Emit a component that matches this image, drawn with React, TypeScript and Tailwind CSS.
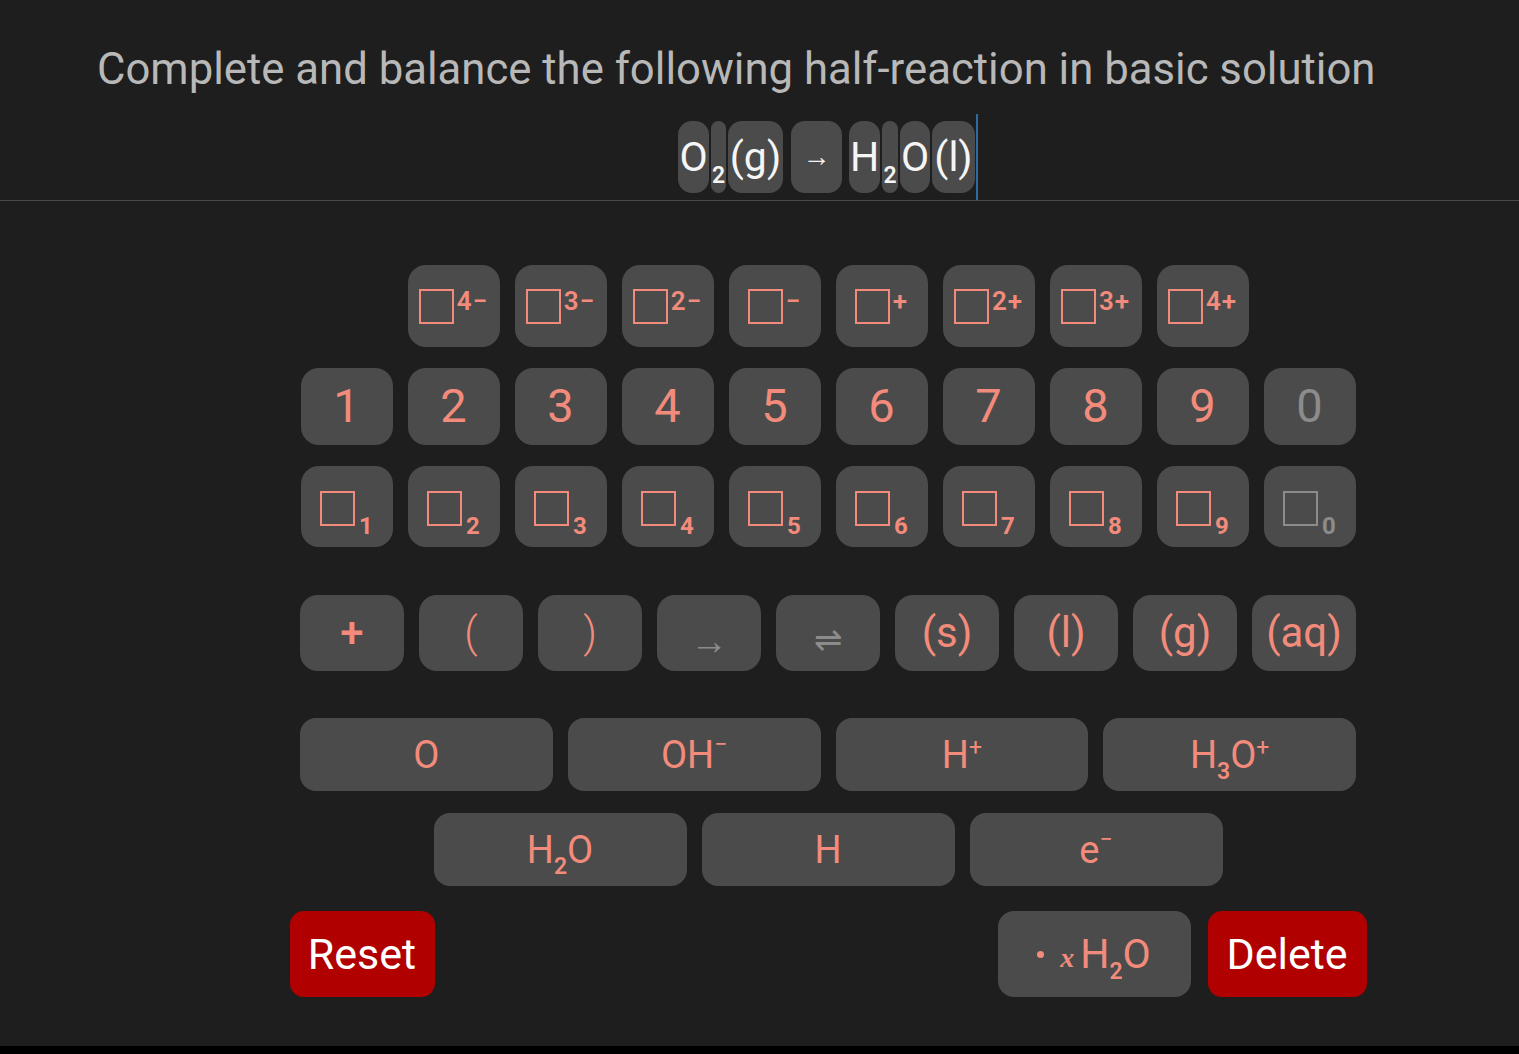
import type { ReactNode } from 'react';

// keypad rows
const charges = ['4−', '3−', '2−', '−', '+', '2+', '3+', '4+'];
const digits = ['1', '2', '3', '4', '5', '6', '7', '8', '9', '0'];

function Key({ className = '', children }: { className?: string; children: ReactNode }) {
    return (
        <button className={`flex items-center justify-center bg-[#4b4b4b] text-[#f28b7b] ${className}`}>
            {children}
        </button>
    );
}

function Square({ muted = false }: { muted?: boolean }) {
    return <span className={`block w-[35px] h-[35px] border-[2.5px] ${muted ? 'border-[#8c8c8c]' : 'border-[#f28b7b]'}`} />;
}

function Token({ className = '', children }: { className?: string; children: ReactNode }) {
    return (
        <div className={`flex h-[72px] items-center justify-center rounded-[14px] bg-[#4b4b4b] ${className}`}>
            {children}
        </div>
    );
}

// inline sub/superscripts, sized for the 38-41px key labels
function Sub({ children }: { children: ReactNode }) {
    return <span className="relative top-[11px] text-[23px] font-semibold leading-none">{children}</span>;
}

function Sup({ children, plus = false }: { children: ReactNode; plus?: boolean }) {
    return <span className={`relative text-[23px] leading-none ${plus ? '-top-[13px]' : '-top-[16px]'}`}>{children}</span>;
}

export default function App() {
    return (
        <div className="min-h-screen bg-black font-['Roboto',sans-serif]">
            <div className="h-[1046px] bg-[#1e1e1e]">
                <h1 className="pl-[97px] pt-[45px] text-[43.7px] leading-[48px] text-[#b8b8b8]">
                    Complete and balance the following half-reaction in basic solution
                </h1>

                {/* equation being built */}
                <div className="mt-[21px] border-b border-[#4a4a4a]">
                    <div className="ml-[300px] w-[1056px] flex h-[86px] items-center justify-center text-[41px] leading-none text-[#f5f5f5]">
                        <div className="flex items-center gap-[2px]">
                            <Token className="w-[31px]">O</Token>
                            <Token className="w-[15px]">
                                <span className="mt-[36px] text-[23px] font-semibold leading-none">2</span>
                            </Token>
                            <Token className="w-[55px]">(g)</Token>
                            <Token className="ml-[6px] mr-[5px] w-[51px]">
                                <span className="text-[28px]">→</span>
                            </Token>
                            <Token className="w-[31px]">H</Token>
                            <Token className="w-[16px]">
                                <span className="mt-[36px] text-[23px] font-semibold leading-none">2</span>
                            </Token>
                            <Token className="w-[30px]">O</Token>
                            <Token className="w-[43px]">(l)</Token>
                        </div>
                        <div className="ml-[1px] h-[86px] w-[2px] bg-[#2f6aa3]" />
                    </div>
                </div>

                {/* keypad */}
                <div className="ml-[300px] mt-[64px] flex w-[1056px] flex-col items-center">
                    <div className="flex h-[82px] gap-[15px]">
                        {charges.map(c => (
                            <Key key={c} className="w-[92px] rounded-[18px]">
                                <span className="flex items-start gap-[3px]">
                                    <Square />
                                    <span className="-mt-[1px] text-[26px] font-semibold leading-none tracking-[1px]">{c}</span>
                                </span>
                            </Key>
                        ))}
                    </div>

                    <div className="mt-[21px] flex h-[77px] gap-[15px]">
                        {digits.map(d => (
                            <Key key={d} className={`w-[92px] rounded-[18px] text-[47px] ${d === '0' ? '!text-[#8c8c8c]' : ''}`}>
                                {d}
                            </Key>
                        ))}
                    </div>

                    <div className="mt-[21px] flex h-[81px] gap-[15px]">
                        {digits.map(d => (
                            <Key key={d} className="w-[92px] rounded-[18px]">
                                <span className="mt-[3px] flex items-end gap-[4px]">
                                    <Square muted={d === '0'} />
                                    <span className={`-mb-[12px] text-[24px] font-bold leading-none ${d === '0' ? 'text-[#8c8c8c]' : ''}`}>{d}</span>
                                </span>
                            </Key>
                        ))}
                    </div>

                    <div className="mt-[48px] flex h-[76px] gap-[15px] text-[42px] leading-none">
                        <Key className="w-[104px] rounded-[18px] font-medium">+</Key>
                        <Key className="w-[104px] rounded-[18px] font-light">(</Key>
                        <Key className="w-[104px] rounded-[18px] font-light">)</Key>
                        <Key className="w-[104px] rounded-[18px] !text-[#8c8c8c]">
                            <span className="mt-[16px] text-[38px] font-light">→</span>
                        </Key>
                        <Key className="w-[104px] rounded-[18px] !text-[#8c8c8c]">
                            <span className="mt-[12px] text-[34px] font-light">⇌</span>
                        </Key>
                        <Key className="w-[104px] rounded-[18px]">(s)</Key>
                        <Key className="w-[104px] rounded-[18px]">(l)</Key>
                        <Key className="w-[104px] rounded-[18px]">(g)</Key>
                        <Key className="w-[104px] rounded-[18px]">(aq)</Key>
                    </div>

                    <div className="mt-[47px] grid h-[73px] w-full grid-cols-4 gap-[15px] text-[38px] leading-none">
                        <Key className="rounded-[16px]">O</Key>
                        <Key className="rounded-[16px]"><span>OH<Sup>−</Sup></span></Key>
                        <Key className="rounded-[16px]"><span>H<Sup plus>+</Sup></span></Key>
                        <Key className="rounded-[16px]"><span>H<Sub>3</Sub>O<Sup plus>+</Sup></span></Key>
                    </div>

                    <div className="mt-[22px] flex h-[73px] gap-[15px] text-[38px] leading-none">
                        <Key className="w-[253px] rounded-[16px]"><span>H<Sub>2</Sub>O</span></Key>
                        <Key className="w-[253px] rounded-[16px]">H</Key>
                        <Key className="w-[253px] rounded-[16px]"><span>e<Sup>−</Sup></span></Key>
                    </div>

                    <div className="mt-[25px] flex h-[86px] w-[1077px] justify-between text-[41px] leading-none">
                        <button className="w-[145px] rounded-[14px] bg-[#b00000] text-[43px] text-white">Reset</button>
                        <div className="flex gap-[17px]">
                            <Key className="w-[193px] rounded-[16px]">
                                <span className="mr-[16px] h-[7px] w-[7px] rounded-full bg-[#f28b7b]" />
                                <span className="mr-[6px] mt-[8px] font-['Liberation_Serif',serif] text-[28px] font-bold italic">x</span>
                                <span>H<Sub>2</Sub>O</span>
                            </Key>
                            <button className="w-[159px] rounded-[14px] bg-[#b00000] text-[43px] text-white">Delete</button>
                        </div>
                    </div>
                </div>
            </div>
        </div>
    );
}
